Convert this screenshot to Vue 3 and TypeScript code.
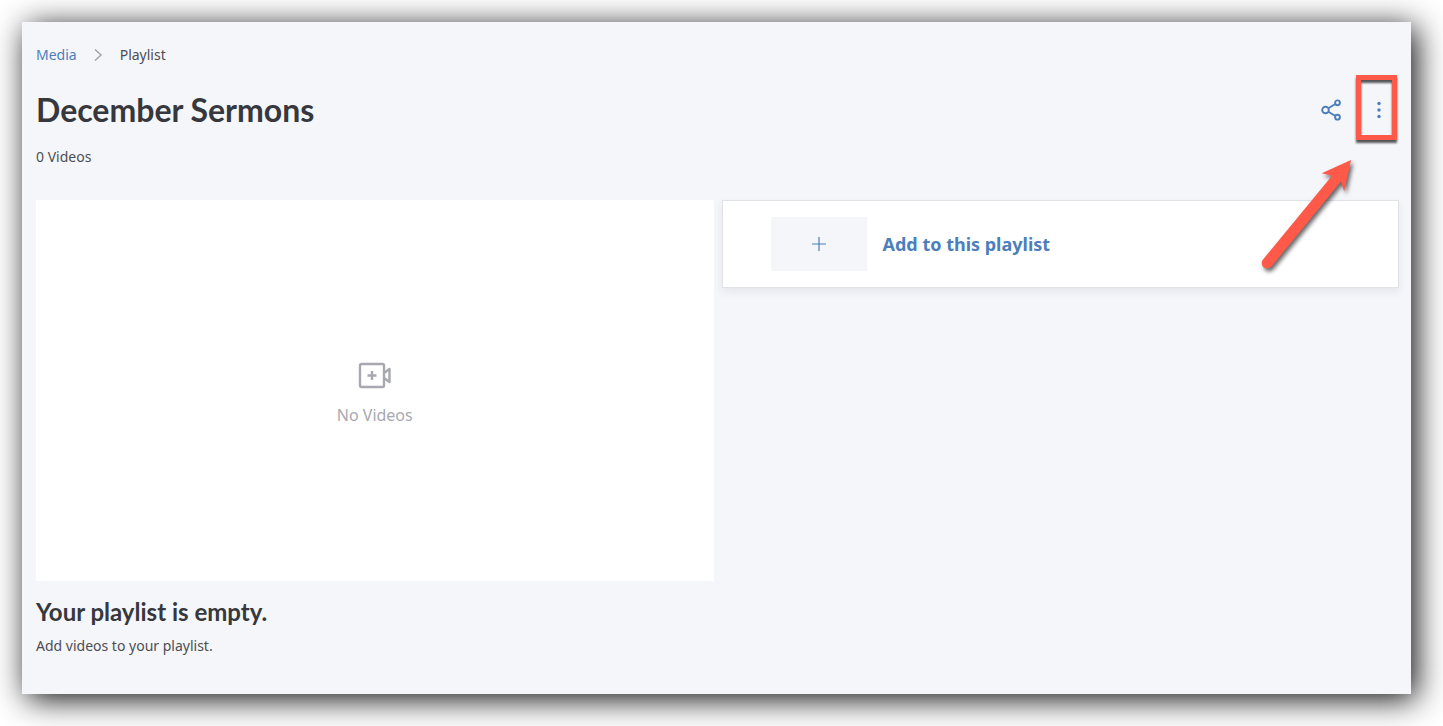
<script setup lang="ts">
import { ref } from 'vue'

interface Playlist {
  title: string
  videos: string[]
}

const playlist = ref<Playlist>({ title: 'December Sermons', videos: [] })
</script>

<template>
  <main class="panel">
    <nav class="crumbs" aria-label="Breadcrumb">
      <a href="#media">Media</a>
      <svg class="chevron" width="9" height="12" viewBox="0 0 9 12" aria-hidden="true">
        <path d="M1 0.5 7 6 1 11.5" />
      </svg>
      <span aria-current="page">Playlist</span>
    </nav>

    <header class="heading">
      <h1>{{ playlist.title }}</h1>
      <div class="actions">
        <button type="button" aria-label="Share">
          <svg width="22" height="22" viewBox="0 0 22 22" aria-hidden="true">
            <g class="share">
              <circle cx="5.500" cy="11" r="3.300" />
              <circle cx="17.500" cy="3.800" r="2.400" />
              <circle cx="17.500" cy="18.200" r="2.400" />
              <path d="M8.300 9.300 15.400 5M8.300 12.700 15.400 17" />
            </g>
          </svg>
        </button>
        <div class="menu">
          <button type="button" aria-label="More options">
            <svg width="4" height="18" viewBox="0 0 4 18" aria-hidden="true">
              <g class="dots">
                <circle cx="2" cy="2.5" r="1.7" />
                <circle cx="2" cy="9" r="1.7" />
                <circle cx="2" cy="15.5" r="1.7" />
              </g>
            </svg>
          </button>
          <span class="callout"></span>
          <svg class="arrow" width="100" height="120" viewBox="0 0 100 120" aria-hidden="true">
            <path d="M100 10 70.700 23.300 81 25.700 12 109.500A5.500 5.500 0 0 0 20.500 116.500L90 31.500 93.200 41.500Z" />
          </svg>
        </div>
      </div>
    </header>
    <p class="count">{{ playlist.videos.length }} Videos</p>

    <div class="columns">
      <section>
        <div class="player">
          <svg width="34" height="28" viewBox="0 0 34 28" aria-hidden="true">
            <g class="camera">
              <rect x="2" y="2" width="24" height="23" rx="1.500" />
              <path d="M26 11 31.500 7V20L26 16M9.500 13.500H18.500M14 9V18" />
            </g>
          </svg>
          <span>No Videos</span>
        </div>
        <h2>Your playlist is empty.</h2>
        <p class="hint">Add videos to your playlist.</p>
      </section>

      <button type="button" class="add">
        <span class="thumb">
          <svg width="14" height="14" viewBox="0 0 14 14" aria-hidden="true">
            <path d="M0 7H14M7 0V14" />
          </svg>
        </span>
        <span>Add to this playlist</span>
      </button>
    </div>
  </main>
</template>

<style>
body {
  margin: 0;
  background: #fff;
}
</style>

<style scoped>
.panel {
  margin: 22px 32px 32px 22px;
  padding: 23px 12px 38px 14px;
  background: #f4f6fa;
  box-shadow: 5px 5px 30px rgba(0, 0, 0, 0.95);
  font: 14px/20px "Noto Sans", sans-serif;
  color: #4d4e53;
}

.crumbs {
  display: flex;
  align-items: center;
  gap: 17px;
}

.crumbs a {
  color: #4c7ebc;
  text-decoration: none;
}

.chevron {
  fill: none;
  stroke: #a5a6ac;
  stroke-width: 1.5;
}

.heading {
  display: flex;
  align-items: center;
  justify-content: space-between;
  margin-top: 25px;
}

h1,
h2 {
  margin: 0;
  color: #36383d;
  font-family: Lato, sans-serif;
  font-weight: 700;
}

h1 {
  font-size: 32px;
  line-height: 40px;
}

h2 {
  margin-top: 15px;
  font-size: 24px;
  line-height: 32px;
}

.actions {
  display: flex;
  gap: 8px;
}

button {
  padding: 0;
  border: 0;
  background: none;
  color: #4c7ebc;
  font: inherit;
  cursor: pointer;
}

.actions button {
  display: flex;
  align-items: center;
  justify-content: center;
  width: 40px;
  height: 40px;
}

.share {
  fill: none;
  stroke: currentColor;
  stroke-width: 1.9;
}

.dots {
  fill: currentColor;
}

.menu {
  position: relative;
}

.callout {
  position: absolute;
  top: -15px;
  left: -3px;
  width: 31px;
  height: 55px;
  border: 5px solid #ff594a;
  filter: drop-shadow(0 3px 1px rgba(0, 0, 0, 0.65));
  pointer-events: none;
}

.arrow {
  position: absolute;
  top: 60px;
  right: 48px;
  overflow: visible;
  fill: #ff594a;
  filter: drop-shadow(2px 3px 2px rgba(0, 0, 0, 0.6));
  pointer-events: none;
}

.count {
  margin: 17px 0 0;
}

.columns {
  display: grid;
  grid-template-columns: 1fr 1fr;
  align-items: start;
  gap: 8px;
  margin-top: 33px;
}

.player {
  display: flex;
  flex-direction: column;
  align-items: center;
  justify-content: center;
  gap: 13px;
  box-sizing: border-box;
  padding-top: 7px;
  aspect-ratio: 16 / 9;
  background: #fff;
  color: #a8a9b0;
  font-size: 16px;
  line-height: 24px;
}

.camera {
  fill: none;
  stroke: currentColor;
  stroke-width: 2.4;
  stroke-linejoin: round;
}

.hint {
  margin: 8px 0 0;
}

.add {
  display: flex;
  align-items: center;
  gap: 16px;
  padding: 16px 48px;
  border: 1px solid #e1e1e8;
  background: #fff;
  box-shadow: 0 4px 8px rgba(50, 50, 70, 0.08);
  font-size: 18px;
  font-weight: 700;
  line-height: 24px;
}

.thumb {
  display: flex;
  align-items: center;
  justify-content: center;
  width: 96px;
  height: 54px;
  background: #f4f6fa;
}

.thumb path {
  stroke: currentColor;
  stroke-width: 1.2;
}
</style>
